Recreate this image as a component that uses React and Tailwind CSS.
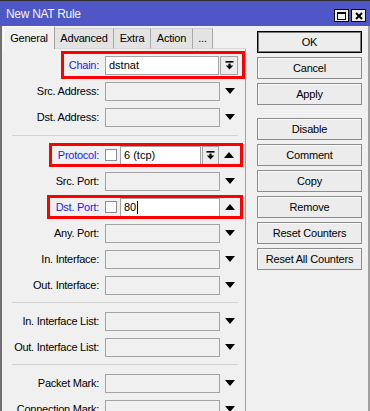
import React from 'react'

const font = "font-['Liberation_Sans',Arial,sans-serif]"

function Down() {
  return (
    <svg width="10" height="6" viewBox="0 0 10 6">
      <path d="M0 0 H10 L5 6 Z" fill="#000" />
    </svg>
  )
}

function Up() {
  return (
    <svg width="10" height="6" viewBox="0 0 10 6">
      <path d="M0 6 H10 L5 0 Z" fill="#000" />
    </svg>
  )
}

function BarDown() {
  return (
    <svg width="9" height="9" viewBox="0 0 9 9">
      <rect x="0.5" y="0" width="8" height="1.6" fill="#000" />
      <rect x="3.4" y="2.6" width="2.2" height="2.2" fill="#000" />
      <path d="M0.8 4.6 H8.2 L4.5 8.6 Z" fill="#000" />
    </svg>
  )
}

function Slot({ up }) {
  return <div className="w-[20px] flex justify-center">{up ? <Up /> : <Down />}</div>
}

function EmptyBox() {
  return <div className="w-[115px] h-[19px] border border-[#a3a3a3] bg-[#f0f0f0]" />
}

function Check() {
  return <div className="w-[12px] h-[12px] border border-[#8f8f8f] bg-white" />
}

function Row({ label, blue, children }) {
  return (
    <div className="flex items-center h-[26px]">
      <span className={`w-[97px] text-right tracking-[-0.25px] ${blue ? 'text-[#1c1cf0]' : 'text-black'}`}>
        {label}
      </span>
      <div className="ml-[6px] flex items-center">{children}</div>
    </div>
  )
}

function Plain({ label }) {
  return (
    <Row label={label}>
      <EmptyBox />
      <Slot />
    </Row>
  )
}

function Sep({ h, top }) {
  return (
    <div className={`${h} ${top}`}>
      <div className="ml-[10px] w-[226px] border-t border-[#d2d2d2]" />
    </div>
  )
}

function Btn({ children, ok }) {
  return (
    <div
      className={`h-[22px] flex items-center justify-center tracking-[-0.2px] ${
        ok
          ? 'border border-black bg-[#ededed] shadow-[inset_0_0_0_1px_#7a7a7a]'
          : 'border border-[#8c8c8c] bg-[#ececec] shadow-[inset_1px_1px_0_#fafafa]'
      }`}
    >
      {children}
    </div>
  )
}

export default function App() {
  const tabs = [
    { name: 'Advanced', w: 'w-[59px]' },
    { name: 'Extra', w: 'w-[37px]' },
    { name: 'Action', w: 'w-[42px]' },
    { name: '...', w: 'w-[20px]' },
  ]

  return (
    <div className={`relative w-[370px] h-[411px] overflow-hidden bg-[#f0f0f0] text-[11px] text-black ${font}`}>
      {/* title bar */}
      <div className="h-[26px] bg-[#4f56c5] border-t border-[#2e2e2e] flex items-center pl-[6px] pr-[4px]">
        <span className="text-[12px] text-[#f4f4f4] tracking-[-0.3px] mt-[1px]">New NAT Rule</span>
        <div className="ml-auto flex gap-[2px] mt-[4px]">
          <div className="w-[15px] h-[13px] bg-[#f0f0f0] border border-black flex items-center justify-center">
            <div className="w-[9px] h-[8px] border border-black border-t-2" />
          </div>
          <div className="w-[15px] h-[13px] bg-[#f0f0f0] border border-black flex items-center justify-center">
            <svg width="8" height="8" viewBox="0 0 8 8">
              <path d="M1 1 L7 7 M7 1 L1 7" stroke="#000" strokeWidth="2" />
            </svg>
          </div>
        </div>
      </div>

      <div className="flex h-[385px]">
        {/* left: tabs + form */}
        <div className="w-[246px] border-l-2 border-[#707070] flex flex-col">
          <div className="h-[23px] flex items-end pl-[1px]">
            <div className="w-[52px] h-[23px] bg-[#f0f0f0] border-l border-t border-white border-r border-r-[#a0a0a0] flex items-center justify-center tracking-[-0.2px]">
              General
            </div>
            {tabs.map((t) => (
              <div
                key={t.name}
                className={`${t.w} h-[21px] bg-[#e3e3e3] border-t border-r border-[#cfcfcf] border-r-[#a8a8a8] border-b border-b-[#d8d8d8] flex items-center justify-center tracking-[-0.2px]`}
              >
                {t.name}
              </div>
            ))}
            <div className="flex-1 h-[1px] bg-[#d8d8d8]" />
          </div>

          <div className="flex-1 border-r border-[#a0a0a0] pt-[3px]">
            <Row label="Chain:" blue>
              <div className="w-[114px] h-[19px] border border-[#a3a3a3] bg-white pl-[3px] flex items-center">dstnat</div>
              <div className="ml-[1px] w-[18px] h-[19px] border border-[#a3a3a3] bg-[#ececec] flex items-center justify-center">
                <BarDown />
              </div>
            </Row>
            <Plain label="Src. Address:" />
            <Plain label="Dst. Address:" />
            <Sep h="h-[12px]" top="pt-[5px]" />
            <Row label="Protocol:" blue>
              <Check />
              <div className="ml-[3px] w-[81px] h-[19px] border border-[#a3a3a3] bg-white pl-[3px] flex items-center">6 (tcp)</div>
              <div className="ml-[1px] w-[17px] h-[19px] border border-[#a3a3a3] bg-[#ececec] flex items-center justify-center">
                <BarDown />
              </div>
              <Slot up />
            </Row>
            <Plain label="Src. Port:" />
            <Row label="Dst. Port:" blue>
              <Check />
              <div className="ml-[3px] w-[100px] h-[19px] border border-[#a3a3a3] bg-white pl-[3px] flex items-center">
                80<span className="ml-[1px] w-[1px] h-[13px] bg-black" />
              </div>
              <Slot up />
            </Row>
            <Plain label="Any. Port:" />
            <Plain label="In. Interface:" />
            <Plain label="Out. Interface:" />
            <Sep h="h-[10px]" top="pt-[4px]" />
            <Plain label="In. Interface List:" />
            <Plain label="Out. Interface List:" />
            <Sep h="h-[10px]" top="pt-[4px]" />
            <Plain label="Packet Mark:" />
            <Plain label="Connection Mark:" />
          </div>
        </div>

        {/* right: buttons */}
        <div className="flex-1 border-r-2 border-[#a0a0a0] pl-[11px] pr-[6px] pt-[5px] flex flex-col gap-[4px]">
          <Btn ok>OK</Btn>
          <Btn>Cancel</Btn>
          <Btn>Apply</Btn>
          <div className="h-[5px]" />
          <Btn>Disable</Btn>
          <Btn>Comment</Btn>
          <Btn>Copy</Btn>
          <Btn>Remove</Btn>
          <Btn>Reset Counters</Btn>
          <Btn>Reset All Counters</Btn>
        </div>
      </div>

      {/* red annotation boxes */}
      <div className="absolute left-[61px] top-[51px] w-[184px] h-[28px] border-[3px] border-[#ff0000]" />
      <div className="absolute left-[49px] top-[143px] w-[194px] h-[24px] border-[3px] border-[#ff0000]" />
      <div className="absolute left-[47px] top-[195px] w-[196px] h-[24px] border-[3px] border-[#ff0000]" />
    </div>
  )
}
